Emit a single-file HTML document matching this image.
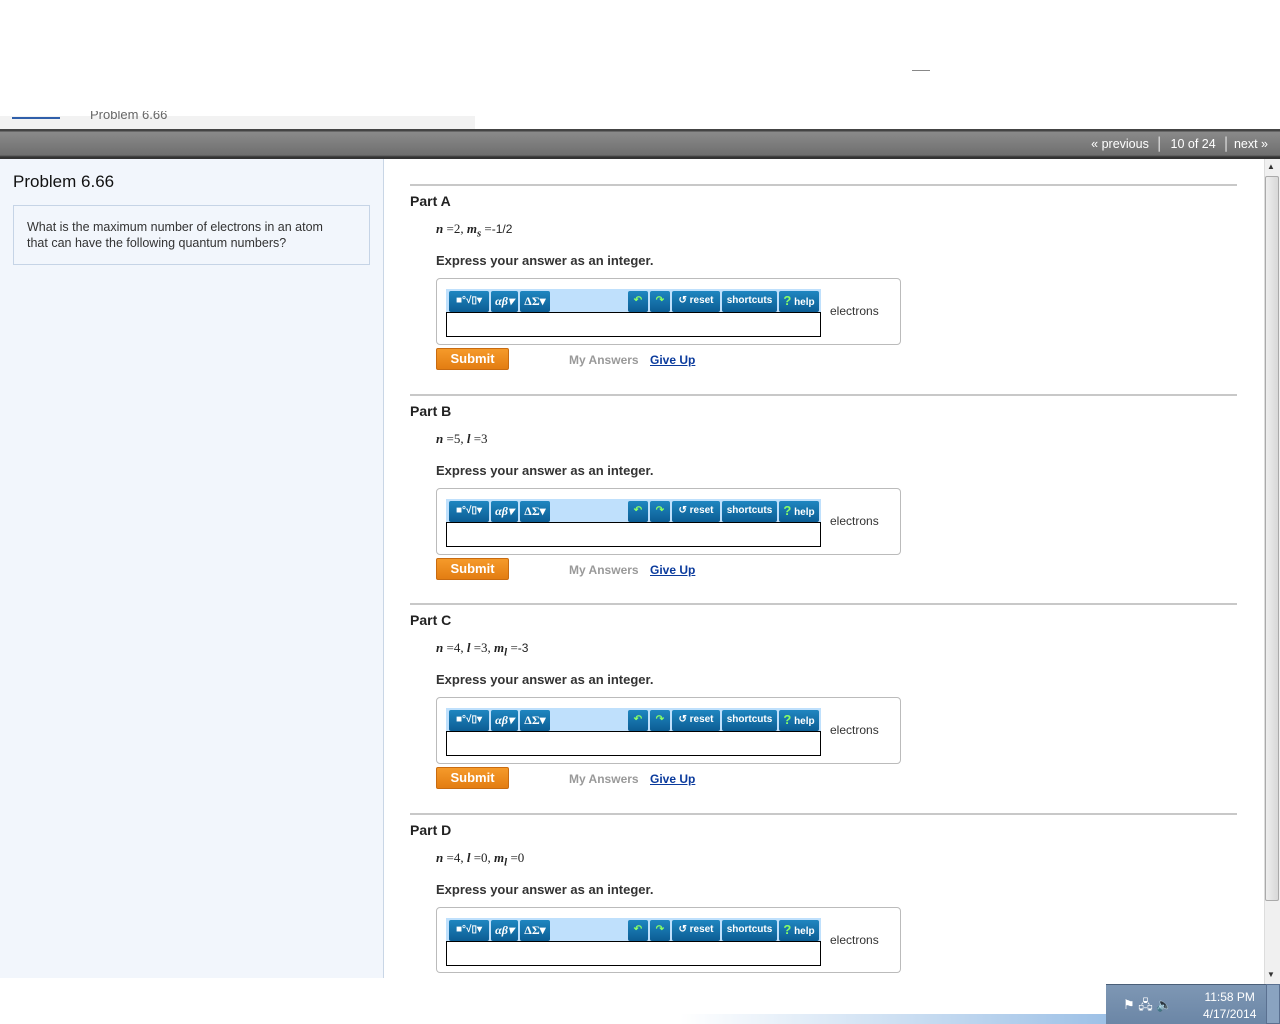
<!DOCTYPE html>
<html><head><meta charset="utf-8"><style>
*{margin:0;padding:0;box-sizing:border-box}
body{width:1280px;height:1024px;overflow:hidden;background:#fff;font-family:"Liberation Sans",Arial,sans-serif;position:relative;color:#222}
.a{position:absolute}
.bar{left:0;top:129px;width:1280px;height:30px;background:linear-gradient(#444 0,#444 2px,#8a8a8a 3px,#6f6f6f 26px,#333 28px,#333 30px)}
.nav{top:137px;right:12px;color:#fff;font-size:12.5px}
.left{left:0;top:159px;width:384px;height:820px;background:#f2f6fc;border-right:1px solid #c9d6e6}
.sb{left:1264px;top:159px;width:16px;height:825px;background:#f0f0f0;border-left:1px solid #ddd}
.thumb{left:1265px;top:176px;width:14px;height:725px;background:linear-gradient(90deg,#eee,#d8d8d8);border:1px solid #aaa;border-radius:2px}
.hr{left:410px;width:827px;height:2px;background:#c8c8c8}
.pl{left:410px;font-size:14px;font-weight:bold;color:#222}
.q{left:436px;font-size:13px;font-family:"Liberation Serif",serif}
.q i{font-weight:bold}
.q span{font-family:"Liberation Sans",sans-serif;font-size:12px}
.ex{left:436px;font-size:13px;font-weight:bold;color:#333}
.box{left:436px;width:465px;height:67px;border:1px solid #bbb;border-radius:4px}
.tb{left:446px;width:375px;height:23px;background:#bfe0fc}
.btn{position:absolute;top:2px;height:21px;background:linear-gradient(#1f86c0,#0c5d94);color:#fff;font-size:10px;font-weight:bold;line-height:20px;text-align:center;border-radius:2px}
.inp{left:446px;width:375px;height:25px;border:1px solid #000;background:#fff}
.el{left:830px;font-size:12px;color:#333}
.sub{left:436px;width:73px;height:22px;background:linear-gradient(#f59a2a,#e37d12);border:1px solid #c96b10;border-radius:2px;color:#fff;font-weight:bold;font-size:13px;text-align:center;line-height:20px}
.my{left:569px;font-size:12px;font-weight:bold;color:#999}
.gu{left:650px;font-size:12px;font-weight:bold;color:#0a3a9c;text-decoration:underline}
</style></head><body>
<div class="a" style="left:0;top:116px;width:475px;height:14px;background:#f2f2f2"></div>
<div class="a" style="left:12px;top:117px;width:48px;height:2px;background:#2f5faa"></div>
<div class="a" style="left:90px;top:111px;font-size:13px;color:#666;height:8px;overflow:hidden;line-height:13px"><div style="margin-top:-3px">Problem 6.66</div></div>
<div class="a" style="left:912px;top:70px;width:18px;height:1px;background:#888"></div>
<div class="a bar"></div>
<div class="a nav">« previous &nbsp;│&nbsp; 10 of 24 &nbsp;│&nbsp;next »</div>
<div class="a left"></div>
<div class="a" style="left:13px;top:172px;font-size:17px;color:#111">Problem 6.66</div>
<div class="a" style="left:13px;top:205px;width:357px;height:60px;border:1px solid #c6d4e6;background:#f2f6fc;padding:13px 30px 13px 13px;font-size:12.5px;line-height:16px;color:#333">What is the maximum number of electrons in an atom that can have the following quantum numbers?</div>
<div class="a sb"></div><div class="a thumb"></div>
<div class="a" style="left:1267px;top:162px;font-size:8px;color:#333">▲</div>
<div class="a" style="left:1267px;top:970px;font-size:8px;color:#333">▼</div>

<div id="parts"></div>
<script>
const P=[["A",'<i>n</i> =2, <i>m<sub>s</sub></i> =<span>-1/2</span>'],["B",'<i>n</i> =5, <i>l</i> =3'],["C",'<i>n</i> =4, <i>l</i> =3, <i>m<sub>l</sub></i> =<span>-3</span>'],["D",'<i>n</i> =4, <i>l</i> =0, <i>m<sub>l</sub></i> =0']];
let h='';
P.forEach((p,k)=>{const o=Math.round(k*209.5);
h+=`<div class="a hr" style="top:${184+o}px"></div>
<div class="a pl" style="top:${193+o}px">Part ${p[0]}</div>
<div class="a q" style="top:${221+o}px">${p[1]}</div>
<div class="a ex" style="top:${253+o}px">Express your answer as an integer.</div>
<div class="a box" style="top:${278+o}px"></div>
<div class="a tb" style="top:${289+o}px">
<div class="btn" style="left:3px;width:40px">■°√▯▾</div>
<div class="btn" style="left:45px;width:27px;font-family:'Liberation Serif';font-style:italic;font-size:12px">αβ▾</div>
<div class="btn" style="left:74px;width:30px;font-family:'Liberation Serif';font-size:12px">ΔΣ▾</div>
<div class="btn" style="left:182px;width:20px;color:#8f6">↶</div>
<div class="btn" style="left:204px;width:20px;color:#8f6">↷</div>
<div class="btn" style="left:226px;width:48px">↺ reset</div>
<div class="btn" style="left:276px;width:55px">shortcuts</div>
<div class="btn" style="left:333px;width:40px"><span style="color:#8f6;font-size:13px">?</span> help</div>
</div>
<div class="a inp" style="top:${312+o}px"></div>
<div class="a el" style="top:${304+o}px">electrons</div>`;
if(k<3)h+=`<div class="a sub" style="top:${348+o}px">Submit</div>
<div class="a my" style="top:${353+o}px">My Answers</div>
<div class="a gu" style="top:${353+o}px">Give Up</div>`;});
document.getElementById('parts').innerHTML=h;
</script>
<div class="a" style="left:0;top:966px;width:1264px;height:58px;background:#fff"></div>
<div class="a" style="left:436px;top:966px;width:465px;height:7px;border:1px solid #bbb;border-top:none;border-radius:0 0 4px 4px"></div>
<div class="a" style="left:0;top:966px;width:384px;height:12px;background:#f2f6fc;border-right:1px solid #c9d6e6"></div>
<div class="a" style="left:680px;top:1014px;width:430px;height:10px;background:linear-gradient(90deg,#fff,#9cc0e6)"></div>
<div class="a" style="left:1106px;top:984px;width:174px;height:40px;background:linear-gradient(#7e97b4,#6b86a6);border-top:1px solid #4a5f78"></div>
<div class="a" style="left:1123px;top:996px;color:#fff;font-size:13px">⚑ 🖧 🔈</div>
<div class="a" style="left:1203px;top:989px;color:#fff;font-size:12px;line-height:17px;text-align:center">11:58 PM<br>4/17/2014</div>
<div class="a" style="left:1266px;top:984px;width:14px;height:40px;background:#8aa3c0;border:1px solid #5a7090"></div>
</body></html>
